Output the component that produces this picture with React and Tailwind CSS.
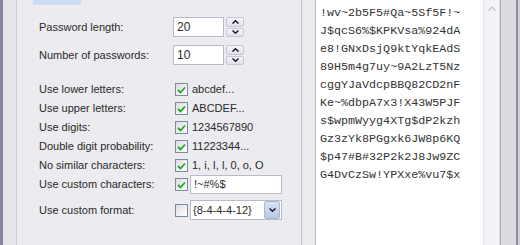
import React from 'react';

const lines = [
  '!wv~2b5F5#Qa~5Sf5F!~',
  'J$qcS6%$KPKVsa%924dA',
  'e8!GNxDsjQ9ktYqkEAdS',
  '89H5m4g7uy~9A2LzT5Nz',
  'cggYJaVdcpBBQ82CD2nF',
  'Ke~%dbpA7x3!X43W5PJF',
  's$wpmWyyg4XTg$dP2kzh',
  'Gz3zYk8PGgxk6JW8p6KQ',
  '$p47#B#32P2k2J8Jw9ZC',
  'G4DvCzSw!YPXxe%vu7$x',
];

const checks = [
  { label: 'Use lower letters:', text: 'abcdef...' },
  { label: 'Use upper letters:', text: 'ABCDEF...' },
  { label: 'Use digits:', text: '1234567890' },
  { label: 'Double digit probability:', text: '11223344...' },
  { label: 'No similar characters:', text: '1, i, I, l, 0, o, O' },
];

function Chevron({ up }) {
  return (
    <svg width="7" height="4" viewBox="0 0 7 4">
      <path d={up ? 'M0.5 3.5 L3.5 0.8 L6.5 3.5' : 'M0.5 0.5 L3.5 3.2 L6.5 0.5'} fill="none" stroke="#1b1b2e" strokeWidth="1.5" />
    </svg>
  );
}

function Checkbox({ checked }) {
  return (
    <div className="w-[13px] h-[13px] border border-[#7b8aa0] bg-gradient-to-br from-[#dcdce4] to-white flex items-center justify-center shrink-0">
      {checked && (
        <svg width="9" height="8" viewBox="0 0 9 8">
          <path d="M1 4 L3.5 6.5 L8 1.5" fill="none" stroke="#21a821" strokeWidth="1.8" />
        </svg>
      )}
    </div>
  );
}

function SpinRow({ label, value }) {
  return (
    <div className="flex items-center h-[20px]">
      <div className="w-[134px]">{label}</div>
      <div className="w-[51px] h-[20px] bg-white border border-[#b6bcc8] flex items-center pl-[3px] text-[12px]">{value}</div>
      <div className="ml-[2px] w-[18px] h-[20px] flex flex-col gap-[1px]">
        <div className="flex-1 rounded-[2px] border border-[#c4c8d4] bg-gradient-to-b from-[#f7f7fa] to-[#dfe0e8] flex items-center justify-center"><Chevron up /></div>
        <div className="flex-1 rounded-[2px] border border-[#c4c8d4] bg-gradient-to-b from-[#f7f7fa] to-[#dfe0e8] flex items-center justify-center"><Chevron /></div>
      </div>
    </div>
  );
}

export default function App() {
  return (
    <div className="w-[520px] h-[245px] flex bg-[#ecebef] overflow-hidden text-[11px] text-[#2a2a2a] font-['Liberation_Sans',Arial,sans-serif]">
      <div className="w-[17px] h-full shrink-0 bg-[#e6e6ea] border-l-[3px] border-l-[#85859b] border-r border-r-[#cdcdd5]" />

      <div className="w-[285px] h-full shrink-0 border-r border-[#c2c2ca] pl-[22px] flex flex-col">
        <div className="ml-[-6px] w-[48px] h-[5px] bg-[#cddcf3]" />
        <div className="mt-[12px] flex flex-col gap-[8px]">
          <SpinRow label="Password length:" value="20" />
          <SpinRow label="Number of passwords:" value="10" />
        </div>
        <div className="mt-[15px] flex flex-col">
          {checks.map((c) => (
            <div key={c.label} className="flex items-center h-[19px]">
              <div className="w-[136px]">{c.label}</div>
              <Checkbox checked />
              <span className="ml-[4px]">{c.text}</span>
            </div>
          ))}
          <div className="flex items-center h-[19px]">
            <div className="w-[136px]">Use custom characters:</div>
            <Checkbox checked />
            <div className="ml-[2px] w-[92px] h-[19px] bg-white border border-[#b6bcc8] flex items-center pl-[3px]">!~#%$</div>
          </div>
          <div className="mt-[6px] flex items-center h-[20px]">
            <div className="w-[136px]">Use custom format:</div>
            <Checkbox />
            <div className="ml-[2px] w-[92px] h-[20px] bg-white border border-[#b6bcc8] flex items-center pl-[2px]">
              <span className="flex-1">{'{8-4-4-4-12}'}</span>
              <div className="w-[16px] h-[18px] mr-[1px] rounded-[2px] border border-[#a9b7d6] bg-gradient-to-b from-[#dbe3f6] to-[#b9c6e6] flex items-center justify-center">
                <Chevron />
              </div>
            </div>
          </div>
        </div>
      </div>

      <div className="w-[13px] shrink-0" />

      <div className="w-[168px] h-full shrink-0 bg-white border-l border-[#b8bcc8] pl-[4px] pt-[4px] font-['Liberation_Mono',monospace] text-[11.7px] leading-[18px] text-[#333]">
        {lines.map((l) => (
          <div key={l} className="whitespace-pre">{l}</div>
        ))}
      </div>

      <div className="w-[17px] h-full shrink-0 bg-[#f3f3f7] border-l border-r border-[#e2e2ea] flex justify-center pt-[6px]">
        <svg width="8" height="5" viewBox="0 0 8 5">
          <path d="M0.5 4.5 L4 1 L7.5 4.5" fill="none" stroke="#c5c5d0" strokeWidth="1.3" />
        </svg>
      </div>

      <div className="flex-1 h-full bg-[#dcdbe2] border-l border-[#a9a9b4] flex justify-end">
        <div className="w-[4px] h-full border-l-[2px] border-[#8c8ca3] bg-[#d0d0da]" />
      </div>
    </div>
  );
}
